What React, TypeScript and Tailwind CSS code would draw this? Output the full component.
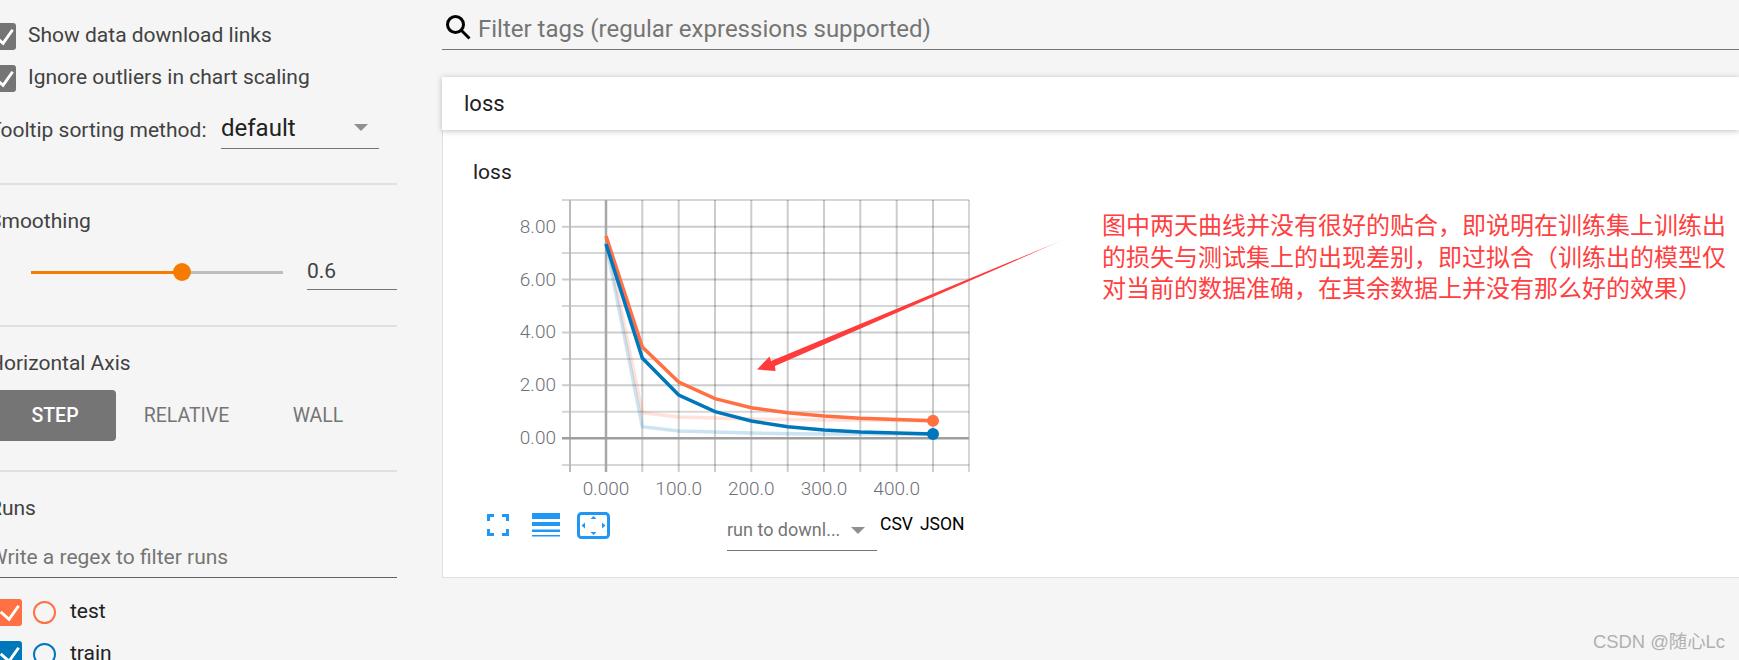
import React from "react";

const orange = "#ff7043";
const blue = "#0077bb";
const iconBlue = "#2196f3";

// chart geometry, in page pixels (the svg viewBox starts at 510,195)
const xs = [606, 642.3, 678.7, 715, 751.3, 787.7, 824, 860.3, 896.7, 933];
const majorRows = [226.7, 279.5, 332.4, 385.3];
const minorRows = [200, 253, 306, 359, 411.8, 465];
const cols = [642.3, 678.7, 715, 751.3, 787.7, 824, 860.3, 896.7, 933];

const testSmooth = [236, 347, 382, 398.7, 407.7, 412.7, 416, 418.3, 419.5, 420.7];
const trainSmooth = [244, 358, 395, 411.7, 421, 426.7, 430, 432, 433, 434];
const testRaw = [236, 412.7, 417, 418, 419, 419.5, 420, 420, 420.5, 421];
const trainRaw = [244, 426.7, 431, 432, 433, 433.7, 434, 434, 434, 434.5];

const yLabels = [
  { y: 226.7, t: "8.00" },
  { y: 279.5, t: "6.00" },
  { y: 332.4, t: "4.00" },
  { y: 385.3, t: "2.00" },
  { y: 438.3, t: "0.00" },
];
const xLabels = [
  { x: 606, t: "0.000" },
  { x: 678.7, t: "100.0" },
  { x: 751.3, t: "200.0" },
  { x: 824, t: "300.0" },
  { x: 896.7, t: "400.0" },
];

const pts = (ys: number[]) => ys.map((y, i) => `${xs[i]},${y}`).join(" ");

function Check() {
  return (
    <svg viewBox="0 0 24 24" className="h-full w-full" fill="none" stroke="white" strokeWidth="2.6">
      <path d="M5 11.5l7.5 6.5L21 6" />
    </svg>
  );
}

function CheckRow({ label }: { label: string }) {
  return (
    <div className="flex h-[42px] items-center">
      <span className="h-[27px] w-[27px] rounded-[3px] bg-[#757575]">
        <Check />
      </span>
      <span className="ml-[12px] text-[21px] text-[#424242]">{label}</span>
    </div>
  );
}

function RunRow({ label, color }: { label: string; color: string }) {
  return (
    <div className="flex h-[42px] items-center pl-[6px]">
      <span className="h-[27px] w-[27px] rounded-[3px]" style={{ backgroundColor: color }}>
        <Check />
      </span>
      <span className="ml-[11px] h-[23px] w-[23px] rounded-full border-2" style={{ borderColor: color }} />
      <span className="ml-[14px] text-[21px] text-[#212121]">{label}</span>
    </div>
  );
}

function Sidebar() {
  return (
    <aside className="-ml-[11px] w-[408px] shrink-0">
      <section className="h-[185px] border-b-2 border-[#e0e0e0] pt-[15px]">
        <CheckRow label="Show data download links" />
        <CheckRow label="Ignore outliers in chart scaling" />
        <div className="mt-[9px] flex items-end">
          <span className="w-[217px] shrink-0 whitespace-nowrap pb-[3px] text-right text-[21px] text-[#424242]">
            Tooltip sorting method:
          </span>
          <div className="ml-[15px] flex h-[41px] w-[158px] items-center justify-between border-b border-[#757575] pb-[1px] pr-[11px]">
            <span className="text-[24px] text-[#212121]">default</span>
            <span className="h-0 w-0 border-x-[7px] border-t-[7px] border-x-transparent border-t-[#909090]" />
          </div>
        </div>
      </section>

      <section className="h-[142px] border-b-2 border-[#e0e0e0] pt-[22px]">
        <div className="text-[21px] leading-[28px] text-[#424242]">Smoothing</div>
        <div className="mt-[19px] flex items-end pl-[42px]">
          <div className="relative mb-[16px] h-[3px] w-[252px] bg-[#bdbdbd]">
            <div className="h-full w-[151px] bg-[#f57c00]" />
            <span className="absolute left-[142px] top-[-8px] h-[18px] w-[18px] rounded-full bg-[#f57c00]" />
          </div>
          <div className="ml-[24px] h-[36px] w-[90px] border-b border-[#757575] pt-[3px] text-[21px] leading-[28px] text-[#424242]">
            0.6
          </div>
        </div>
      </section>

      <section className="h-[145px] border-b-2 border-[#e0e0e0] pt-[22px]">
        <div className="text-[21px] leading-[28px] text-[#424242]">Horizontal Axis</div>
        <div className="mt-[13px] flex pl-[5px] text-[19.5px] text-[#757575]">
          <div className="flex h-[51px] w-[122px] items-center justify-center rounded-[4px] bg-[#757575] font-medium text-white">
            STEP
          </div>
          <div className="flex h-[51px] w-[141px] items-center justify-center">RELATIVE</div>
          <div className="flex h-[51px] w-[122px] items-center justify-center">WALL</div>
        </div>
      </section>

      <section className="pt-[22px]">
        <div className="text-[21px] leading-[28px] text-[#424242]">Runs</div>
        <div className="mt-[21px] h-[35px] border-b border-[#616161] text-[21px] leading-[28px] text-[#757575]">
          Write a regex to filter runs
        </div>
        <div className="mt-[13px]">
          <RunRow label="test" color={orange} />
          <RunRow label="train" color={blue} />
        </div>
      </section>
    </aside>
  );
}

function Chart() {
  return (
    <svg viewBox="510 195 470 305" className="h-[305px] w-[470px] shrink-0">
      <g stroke="#000" strokeOpacity="0.2" strokeWidth="2">
        {majorRows.map((y) => (
          <line key={y} x1="562" x2="969" y1={y} y2={y} />
        ))}
        {cols.map((x) => (
          <line key={x} x1={x} x2={x} y1="200" y2="472" />
        ))}
      </g>
      <g stroke="#000" strokeOpacity="0.16" strokeWidth="2">
        {minorRows.map((y) => (
          <line key={y} x1="562" x2="969" y1={y} y2={y} />
        ))}
        <line x1="969" x2="969" y1="200" y2="472" />
      </g>
      <line x1="570" x2="570" y1="200" y2="472" stroke="#bbb" strokeWidth="2" />
      <line x1="606" x2="606" y1="200" y2="472" stroke="#a8a8a8" strokeWidth="2.5" />
      <line x1="562" x2="969" y1="438.3" y2="438.3" stroke="#9e9e9e" strokeWidth="2.5" />

      <polyline points={pts(testRaw)} fill="none" stroke={orange} strokeOpacity="0.2" strokeWidth="3.5" />
      <polyline points={pts(trainRaw)} fill="none" stroke={blue} strokeOpacity="0.2" strokeWidth="3.5" />
      <polyline points={pts(testSmooth)} fill="none" stroke={orange} strokeWidth="3.5" />
      <polyline points={pts(trainSmooth)} fill="none" stroke={blue} strokeWidth="3.5" />
      <circle cx="933" cy="420.7" r="6" fill={orange} />
      <circle cx="933" cy="434" r="6" fill={blue} />

      <g fill="#6f6f78" fontSize="19" fontWeight="300" fontFamily="Roboto, sans-serif">
        {yLabels.map((l) => (
          <text key={l.t} x="556" y={l.y + 6} textAnchor="end">
            {l.t}
          </text>
        ))}
        {xLabels.map((l) => (
          <text key={l.t} x={l.x} y="495" textAnchor="middle">
            {l.t}
          </text>
        ))}
      </g>
    </svg>
  );
}

function ChartToolbar() {
  return (
    <div className="ml-[44px] mt-[12px] flex items-start">
      {/* expand */}
      <svg viewBox="0 0 22 22" className="mt-[2px] h-[22px] w-[22px]" fill="none" stroke={iconBlue} strokeWidth="3">
        <path d="M1.5 7V1.5H7M15 1.5h5.5V7M20.5 15v5.5H15M7 20.5H1.5V15" />
      </svg>
      {/* log scale lines */}
      <svg viewBox="0 0 28 24" className="ml-[23px] mt-[1px] h-[24px] w-[28px]" fill={iconBlue}>
        <rect x="0" y="0" width="28" height="6" />
        <rect x="0" y="9" width="28" height="4" />
        <rect x="0" y="16.5" width="28" height="2.5" />
        <rect x="0" y="22" width="28" height="1.5" />
      </svg>
      {/* fit to domain */}
      <svg viewBox="0 0 33 27" className="ml-[17px] h-[27px] w-[33px]" fill={iconBlue}>
        <rect x="1.5" y="1.5" width="30" height="24" rx="3" fill="none" stroke={iconBlue} strokeWidth="3" />
        <path d="M16.5 4l3 3h-6zM16.5 23l-3-3h6zM4.5 13.5l3.5-3v6zM28.5 13.5l-3.5 3v-6z" />
      </svg>
      <div className="ml-[117px] mt-[6px] flex h-[33px] w-[150px] items-start justify-between border-b border-[#757575] pr-[12px] text-[18px] leading-[24px] text-[#757575]">
        <span>run to downl...</span>
        <span className="mt-[9px] h-0 w-0 border-x-[7px] border-t-[7px] border-x-transparent border-t-[#909090]" />
      </div>
      <div className="ml-[3px] mt-[1px] flex gap-[7px] text-[17.5px] leading-[22px] text-black">
        <span>CSV</span>
        <span>JSON</span>
      </div>
    </div>
  );
}

export default function App() {
  return (
    <div className="relative flex h-[660px] overflow-hidden bg-[#f5f5f5] font-['Roboto',sans-serif]">
      <Sidebar />

      <main className="min-w-0 flex-1 pl-[45px]">
        <div className="flex h-[50px] items-start border-b border-[#757575] pl-[3px] pt-[14px]">
          <svg viewBox="0 0 26 26" className="h-[26px] w-[26px] shrink-0" fill="none" stroke="black" strokeWidth="3">
            <circle cx="10.5" cy="10.5" r="8" />
            <path d="M16.5 16.5L24.5 24.5" />
          </svg>
          <span className="ml-[7px] mt-[1px] text-[24px] leading-[28px] text-[#757575]">
            Filter tags (regular expressions supported)
          </span>
        </div>

        <div className="relative z-10 mt-[27px] flex h-[53px] items-center bg-white pl-[22px] text-[22px] text-[#212121] shadow-[0_1px_6px_rgba(0,0,0,0.25)]">
          loss
        </div>

        <div className="h-[448px] border-b border-l border-[#e0e0e0] bg-white">
          <div className="pl-[30px] pt-[28px] text-[21px] leading-[28px] text-[#212121]">loss</div>
          <div className="mt-[9px] flex items-start">
            <div className="ml-[67px]">
              <Chart />
            </div>
            <div className="ml-[122px] mt-[13px] w-[640px] font-['Noto_Sans_CJK_SC',sans-serif] text-[24px] leading-[31.5px] text-[#ff4040]">
              <div className="whitespace-nowrap">图中两天曲线并没有很好的贴合，即说明在训练集上训练出</div>
              <div className="whitespace-nowrap">的损失与测试集上的出现差别，即过拟合（训练出的模型仅</div>
              <div className="whitespace-nowrap">对当前的数据准确，在其余数据上并没有那么好的效果）</div>
            </div>
          </div>
          <ChartToolbar />
        </div>
      </main>

      {/* hand-drawn arrow laid over the chart */}
      <svg viewBox="0 0 1739 660" className="pointer-events-none absolute left-0 top-0 h-[660px] w-[1739px]">
        <defs>
          <linearGradient id="arrowFade" x1="757" y1="369" x2="1064" y2="239" gradientUnits="userSpaceOnUse">
            <stop offset="0" stopColor="#ff3b3b" />
            <stop offset="0.88" stopColor="#ff3b3b" />
            <stop offset="1" stopColor="#ff3b3b" stopOpacity="0.3" />
          </linearGradient>
        </defs>
        <polygon points="757,369.5 769.5,356.5 771,361 1064,239.5 775,366 775.5,371" fill="url(#arrowFade)" />
      </svg>

      <div className="absolute right-[14px] top-[631px] font-['Liberation_Sans','Noto_Sans_CJK_SC',sans-serif] text-[18.4px] leading-[22px] text-[#b0b0b0]">
        CSDN @随心Lc
      </div>
    </div>
  );
}
